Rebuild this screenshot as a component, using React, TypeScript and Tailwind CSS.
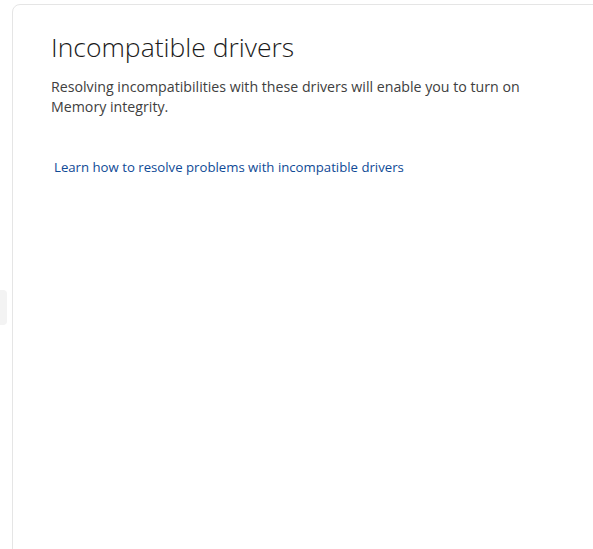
export default function App() {
  return (
    <div className="relative h-[549px] w-[593px] overflow-hidden bg-white font-['Segoe_UI','Open_Sans',sans-serif]">
      {/* tab sliver on the left edge */}
      <div className="absolute left-0 top-[290px] h-[35px] w-[7px] rounded-r-[4px] bg-[#f3f3f3]" />

      <div className="ml-[12px] mt-[4px] h-[560px] w-[600px] rounded-[8px] border border-[#e5e5e5] bg-white pl-[38px] pt-[25px]">
        <h1 className="text-[26.5px] font-light leading-[35px] text-[#1b1b1b]">Incompatible drivers</h1>
        <p className="mt-[12px] w-[490px] text-[14.2px] leading-[20px] text-[#404040]">
          Resolving incompatibilities with these drivers will enable you to turn on Memory integrity.
        </p>
        <a href="#" className="ml-[3px] mt-[40px] block text-[13.2px] leading-[20px] text-[#0f4a96]">
          Learn how to resolve problems with incompatible drivers
        </a>
      </div>
    </div>
  );
}
